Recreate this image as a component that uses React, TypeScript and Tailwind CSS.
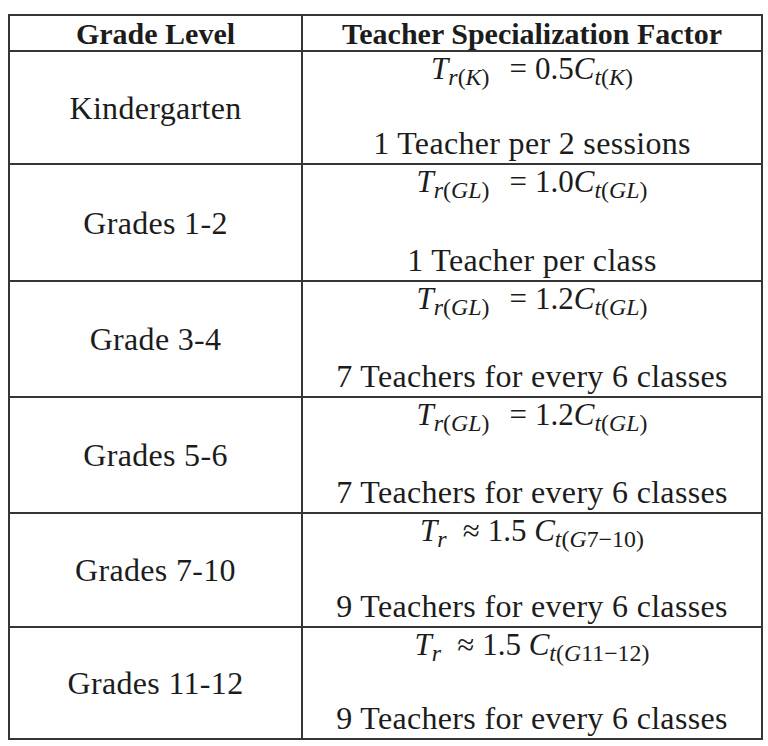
import type { ReactNode } from "react"

type Row = {
  grade: string
  formula: ReactNode
  note: string
  height: string
}

const rows: Row[] = [
  {
    grade: "Kindergarten",
    height: "h-[111px]",
    note: "1 Teacher per 2 sessions",
    formula: (
      <>
        <i>T</i>
        <sub className="text-[0.77em]">
          <i>r</i>(<i>K</i>)
        </sub>
        <span className="ml-[20px] mr-[8px]">=</span>0.5<i>C</i>
        <sub className="text-[0.77em]">
          <i>t</i>(<i>K</i>)
        </sub>
      </>
    ),
  },
  {
    grade: "Grades 1-2",
    height: "h-[115px]",
    note: "1 Teacher per class",
    formula: (
      <>
        <i>T</i>
        <sub className="text-[0.77em]">
          <i>r</i>(<i>GL</i>)
        </sub>
        <span className="ml-[20px] mr-[8px]">=</span>1.0<i>C</i>
        <sub className="text-[0.77em]">
          <i>t</i>(<i>GL</i>)
        </sub>
      </>
    ),
  },
  {
    grade: "Grade 3-4",
    height: "h-[114px]",
    note: "7 Teachers for every 6 classes",
    formula: (
      <>
        <i>T</i>
        <sub className="text-[0.77em]">
          <i>r</i>(<i>GL</i>)
        </sub>
        <span className="ml-[20px] mr-[8px]">=</span>1.2<i>C</i>
        <sub className="text-[0.77em]">
          <i>t</i>(<i>GL</i>)
        </sub>
      </>
    ),
  },
  {
    grade: "Grades 5-6",
    height: "h-[114px]",
    note: "7 Teachers for every 6 classes",
    formula: (
      <>
        <i>T</i>
        <sub className="text-[0.77em]">
          <i>r</i>(<i>GL</i>)
        </sub>
        <span className="ml-[20px] mr-[8px]">=</span>1.2<i>C</i>
        <sub className="text-[0.77em]">
          <i>t</i>(<i>GL</i>)
        </sub>
      </>
    ),
  },
  {
    grade: "Grades 7-10",
    height: "h-[112px]",
    note: "9 Teachers for every 6 classes",
    formula: (
      <>
        <i>T</i>
        <sub className="text-[0.77em]">
          <i>r</i>
        </sub>
        <span className="ml-[16px] mr-[8px]">≈</span>1.5 <i>C</i>
        <sub className="text-[0.77em]">
          <i>t</i>(<i>G</i>7−10)
        </sub>
      </>
    ),
  },
  {
    grade: "Grades 11-12",
    height: "h-[110px]",
    note: "9 Teachers for every 6 classes",
    formula: (
      <>
        <i>T</i>
        <sub className="text-[0.77em]">
          <i>r</i>
        </sub>
        <span className="ml-[16px] mr-[8px]">≈</span>1.5 <i>C</i>
        <sub className="text-[0.77em]">
          <i>t</i>(<i>G</i>11−12)
        </sub>
      </>
    ),
  },
]

export default function App() {
  return (
    <div className="min-h-[746px] bg-white pl-[8px] pt-[14px] font-['Liberation_Serif','Times_New_Roman',serif] text-[#1c1c1c]">
      <div className="w-[755px] border-2 border-[#363636]">
        {/* Header */}
        <div className="grid grid-cols-[293px_1fr] border-b-2 border-[#363636]">
          <div className="flex h-[34px] items-center justify-center border-r-2 border-[#363636] text-[30px] font-bold">
            Grade Level
          </div>
          <div className="flex h-[34px] items-center justify-center text-[30px] font-bold">
            Teacher Specialization Factor
          </div>
        </div>

        {rows.map((row, i) => (
          <div
            key={row.grade}
            className={`grid grid-cols-[293px_1fr] border-[#363636] ${i < rows.length - 1 ? "border-b-2" : ""}`}
          >
            <div
              className={`flex ${row.height} items-center justify-center border-r-2 border-[#363636] text-[32px] tracking-[0.01em]`}
            >
              {row.grade}
            </div>
            <div className={`flex ${row.height} flex-col items-center justify-between pb-[2px]`}>
              <div className="whitespace-nowrap text-[31px] leading-[34px]">{row.formula}</div>
              <div className="whitespace-nowrap text-[32px] leading-[36px] tracking-[0.01em]">{row.note}</div>
            </div>
          </div>
        ))}
      </div>
    </div>
  )
}
